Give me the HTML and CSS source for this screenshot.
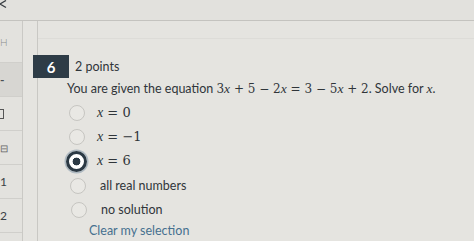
FILE: index.html
```html
<!DOCTYPE html>
<html>
<head>
<meta charset="utf-8">
<link rel="stylesheet" href="styles.css">
</head>
<body>
<div class="topbar">
  <svg class="back" width="8" height="9" viewBox="0 0 8 9"><path d="M7 0.5 L1 4 L7 7.5" fill="none" stroke="#3a3f44" stroke-width="1.4"/></svg>
</div>
<div class="layout">
  <nav class="sidebar">
    <div class="cell tall"><span class="glyph g-h">H</span></div>
    <div class="cell dark"><span class="glyph g-dash">-</span></div>
    <div class="cell"><span class="sq"></span></div>
    <div class="cell"><span class="glyph g-box">⊟</span></div>
    <div class="cell"><span class="glyph g-num">1</span></div>
    <div class="cell"><span class="glyph g-num">2</span></div>
    <div class="cell"></div>
  </nav>
  <main class="content">
    <div class="subhead"></div>
    <section class="question">
      <div class="qhead">
        <div class="qnum">6</div>
        <div class="pts">2 points</div>
      </div>
      <p class="qtext">You are given the equation <span class="m">3<i>x</i> + 5 − 2<i>x</i> = 3 − 5<i>x</i> + 2</span>. Solve for <span class="m"><i>x</i></span>.</p>
      <ul class="opts">
        <li class="opt"><span class="radio"></span><span class="m"><i>x</i> = 0</span></li>
        <li class="opt"><span class="radio"></span><span class="m"><i>x</i> = −1</span></li>
        <li class="opt"><span class="radio checked"></span><span class="m"><i>x</i> = 6</span></li>
        <li class="opt s1"><span class="radio"></span><span class="lbl">all real numbers</span></li>
        <li class="opt s2"><span class="radio"></span><span class="lbl">no solution</span></li>
      </ul>
      <a class="clear">Clear my selection</a>
    </section>
  </main>
</div>
</body>
</html>
```

FILE: styles.css
```css
* { box-sizing: border-box; }
html, body {
  margin: 0;
  width: 474px;
  height: 241px;
  overflow: hidden;
  background: #e5e4e0;
  font-family: Lato, "Open Sans", sans-serif;
  color: #30353a;
}
.topbar {
  height: 21px;
  background: #e2e1dd;
  border-bottom: 1px solid #c4c3bf;
}
.back { display: block; margin-left: -1px; }
.layout { display: flex; height: 220px; }
.sidebar {
  width: 23px;
  border-right: 1px solid #cac9c5;
  display: flex;
  flex-direction: column;
  overflow: hidden;
  background: #e3e2de;
}
.cell {
  height: 34px;
  border-bottom: 1px solid #d0cfcb;
  display: flex;
  align-items: center;
  flex: none;
}
.cell.tall { height: 42px; }
.cell.dark { background: #d7d6d2; }
.glyph { font-size: 10px; color: #4a4f54; line-height: 1; }
.g-h { font-weight: 300; color: #8a8c8e; }
.g-dash { font-weight: 700; font-size: 12px; }
.g-box { font-size: 10px; color: #666; }
.g-num { font-size: 12px; color: #3c4146; }
.sq { width: 4px; height: 10px; border: 1px solid #555; border-left: none; }
.content {
  margin-left: 14px;
  border-left: 1px solid #c9c8c4;
  flex: 1;
}
.subhead { height: 18px; border-bottom: 1px solid #dddcd8; }
.question { margin-left: -5px; padding-top: 16px; }
.qhead { display: flex; align-items: center; gap: 6px; }
.qnum {
  width: 36px;
  height: 23px;
  background: #2e3c47;
  color: #fff;
  font-weight: 700;
  font-size: 15px;
  display: flex;
  align-items: center;
  justify-content: center;
}
.pts { font-size: 12.5px; }
.qtext {
  margin: 3px 0 0 34px;
  font-size: 12.5px;
  line-height: 16px;
  white-space: nowrap;
}
.m { font-family: "DejaVu Serif", "Liberation Serif", serif; font-size: 12px; }
.m i { font-family: "Liberation Serif", serif; font-size: 13.5px; }
.opts { list-style: none; margin: 4px 0 0 36px; padding: 0; }
.opt {
  height: 24.2px;
  display: flex;
  align-items: center;
  gap: 12px;
}
.opt .m { font-size: 13px; }
.opt .m i { font-size: 14px; }
.s1 { padding-left: 1px; }
.s2 { padding-left: 2px; }
.radio {
  width: 16px;
  height: 16px;
  border-radius: 50%;
  border: 1px solid #c6c5c1;
  background: #e9e8e4;
  flex: none;
}
.radio.checked {
  width: 21px;
  height: 21px;
  margin: 0 -2px 0 -3px;
  border: 3px solid #2b3944;
  background: radial-gradient(circle, #2b3944 0 3.6px, #ffffff 4.2px);
  box-shadow: 0 0 0 1.5px #aeb9c1;
}
.lbl { font-size: 12.5px; margin-left: 2px; }
.clear {
  display: block;
  margin: 1px 0 0 56px;
  font-size: 12.5px;
  line-height: 16px;
  color: #46708f;
}
```
